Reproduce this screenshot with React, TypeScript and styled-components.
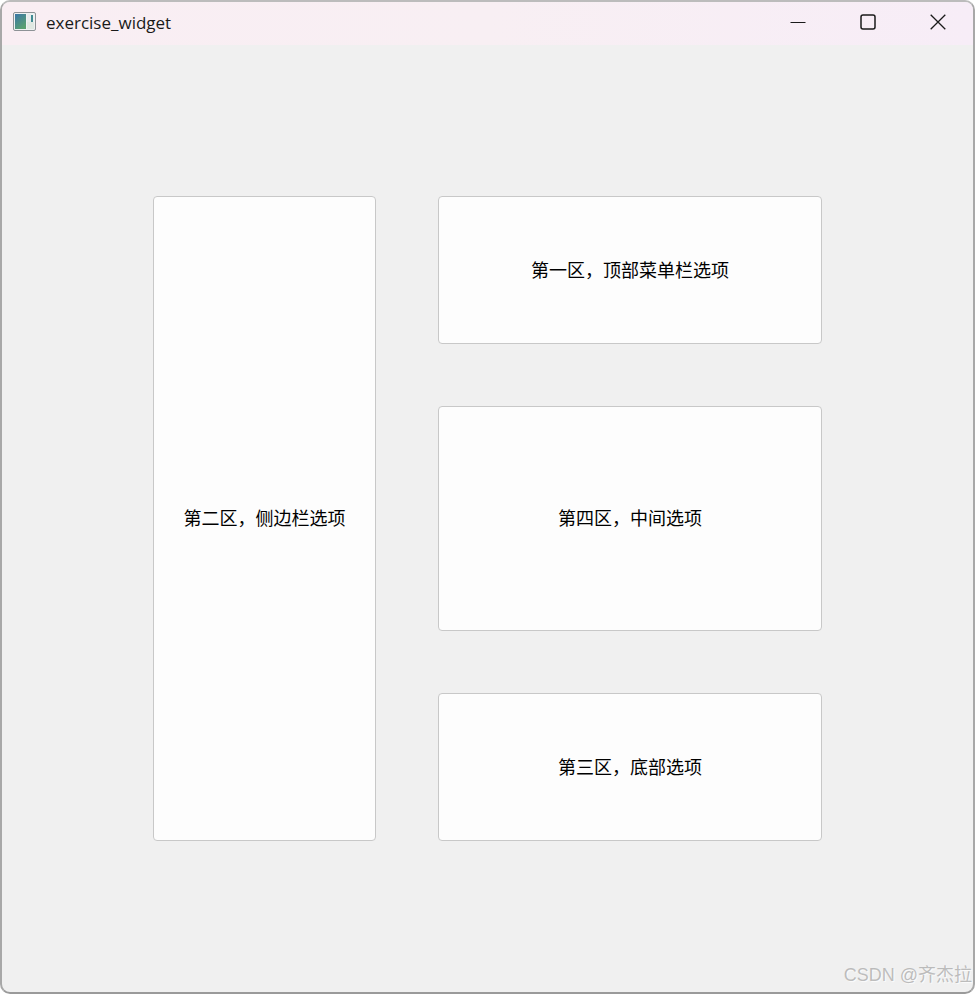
import React from 'react';
import styled, { createGlobalStyle } from 'styled-components';

const GlobalStyle = createGlobalStyle`
  html, body {
    margin: 0;
    padding: 0;
    background: #ffffff;
  }
  * {
    box-sizing: border-box;
  }
`;

const AppIcon = () => (
    <svg width="24" height="20" viewBox="0 0 24 20">
        <defs>
            <linearGradient id="pane" x1="0" y1="0" x2="0.6" y2="1">
                <stop offset="0" stopColor="#3a76a8" />
                <stop offset="1" stopColor="#58a070" />
            </linearGradient>
        </defs>
        <rect x="0.5" y="0.5" width="22" height="18" rx="1.5" fill="#eef1f2" stroke="#8d9296" />
        <rect x="2" y="2" width="11" height="15" fill="url(#pane)" />
        <rect x="14" y="10" width="7" height="7" fill="#dfe8e2" />
        <rect x="14" y="2" width="4" height="8" fill="#e6ebec" />
        <rect x="18" y="3" width="2" height="7" fill="#3f8a92" />
    </svg>
);

const MinimizeIcon = () => (
    <svg width="16" height="16" viewBox="0 0 16 16">
        <path d="M0.5 8.5H15.5" stroke="#1a1a1a" strokeWidth="1" fill="none" />
    </svg>
);

const MaximizeIcon = () => (
    <svg width="16" height="16" viewBox="0 0 16 16">
        <rect x="1" y="1" width="14" height="14" rx="2" stroke="#1a1a1a" strokeWidth="1.5" fill="none" />
    </svg>
);

const CloseIcon = () => (
    <svg width="16" height="16" viewBox="0 0 16 16">
        <path d="M0.7 0.7L15.3 15.3M15.3 0.7L0.7 15.3" stroke="#1a1a1a" strokeWidth="1.3" fill="none" />
    </svg>
);

const App = () => {
    return (
        <Window>
            <GlobalStyle />
            <TitleBar>
                <TitleIcon><AppIcon /></TitleIcon>
                <Title>exercise_widget</Title>
                <WindowControls>
                    <ControlButton><MinimizeIcon /></ControlButton>
                    <ControlButton><MaximizeIcon /></ControlButton>
                    <ControlButton><CloseIcon /></ControlButton>
                </WindowControls>
            </TitleBar>
            <Content>
                <SideCard>第二区，侧边栏选项</SideCard>
                <RightColumn>
                    <OptionCard>第一区，顶部菜单栏选项</OptionCard>
                    <OptionCard $grow>第四区，中间选项</OptionCard>
                    <OptionCard>第三区，底部选项</OptionCard>
                </RightColumn>
            </Content>
            <Watermark>CSDN @齐杰拉</Watermark>
        </Window>
    );
};

export default App;

const Window = styled.div`
    position: relative;
    width: 975px;
    height: 994px;
    display: flex;
    flex-direction: column;
    overflow: hidden;
    background: #f0f0f0;
    border-style: solid;
    border-width: 2px;
    border-color: #bcbcbc #a8a8a8 #9a9a9a #a8a8a8;
    border-radius: 10px;
`;

const TitleBar = styled.div`
    height: 43px;
    flex-shrink: 0;
    display: flex;
    align-items: center;
    padding: 0 0 3px 11px;
    background: linear-gradient(90deg, #f9eef3 0%, #f8eff3 50%, #f7edf7 100%);
`;

const TitleIcon = styled.div`
    width: 33px;
    height: 20px;
    display: flex;
`;

const Title = styled.div`
    flex: 1;
    font-family: "Open Sans", "Noto Sans", sans-serif;
    font-size: 17px;
    color: #1a1a1a;
`;

const WindowControls = styled.div`
    display: flex;
`;

const ControlButton = styled.div`
    width: 70px;
    height: 40px;
    display: flex;
    align-items: center;
    justify-content: center;
`;

const Content = styled.div`
    flex: 1;
    min-height: 0;
    display: grid;
    grid-template-columns: 223px 384px;
    column-gap: 62px;
    padding: 151px;
`;

const Card = styled.div`
    display: flex;
    align-items: center;
    justify-content: center;
    padding-bottom: 3px;
    background: #fdfdfd;
    border: 1px solid #c8c8c8;
    border-radius: 4px;
    font-family: "Noto Sans CJK SC", "Liberation Sans", sans-serif;
    font-size: 18px;
    color: #000000;
`;

const SideCard = styled(Card)`
    height: 100%;
`;

const RightColumn = styled.div`
    display: flex;
    flex-direction: column;
    gap: 62px;
`;

const OptionCard = styled(Card)<{ $grow?: boolean }>`
    flex: ${({ $grow }) => ($grow ? '1' : '0 0 148px')};
`;

const Watermark = styled.div`
    position: absolute;
    right: 1px;
    bottom: 6px;
    font-family: "Liberation Sans", "Noto Sans CJK SC", sans-serif;
    font-size: 18px;
    line-height: 22px;
    color: rgba(150, 150, 150, 0.6);
    text-shadow: 1px 1px 1px rgba(255, 255, 255, 0.8);
`;
